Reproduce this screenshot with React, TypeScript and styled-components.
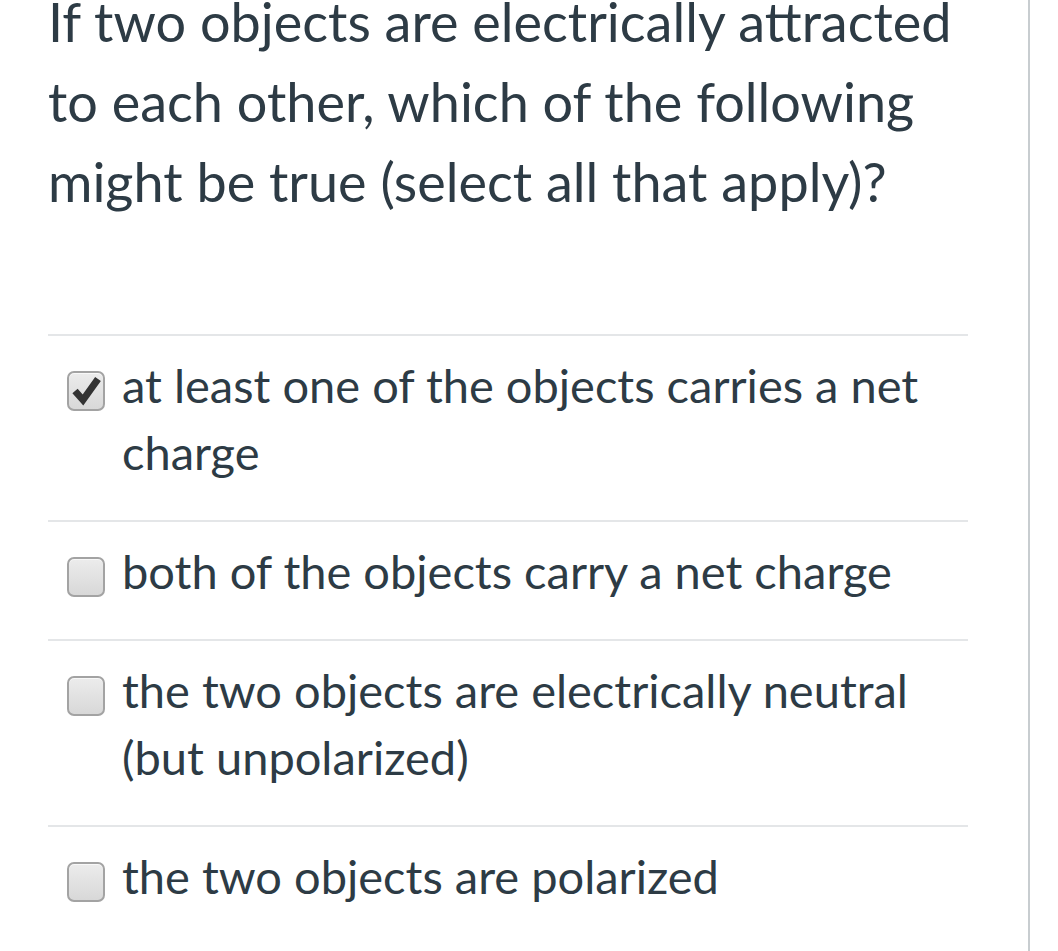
import React from "react";
import styled, { createGlobalStyle } from "styled-components";

const Global = createGlobalStyle`
  html, body { margin: 0; padding: 0; background: #fff; }
  body { font-family: Lato, "Open Sans", sans-serif; color: #2d3b45; overflow: hidden; }
`;

const Page = styled.div`
  width: 1030px;
  height: 951px;
  border-right: 2px solid #c8cdd0;
  box-sizing: border-box;
  overflow: hidden;
  padding-left: 48px;
`;

const Question = styled.p`
  margin: -18px 0 112px 0;
  width: 920px;
  font-size: 54px;
  line-height: 80px;
  font-weight: 400;
`;

const List = styled.div`
  width: 920px;
  display: flex;
  flex-direction: column;
`;

const Row = styled.label`
  display: flex;
  align-items: flex-start;
  gap: 17px;
  padding: 16px 0 34px 19px;
  border-top: 2px solid #e4e6e8;
  font-size: 47px;
  line-height: 67px;
`;

const Box = styled.span`
  flex: 0 0 auto;
  width: 38px;
  height: 40px;
  margin-top: 19px;
  box-sizing: border-box;
  border: 2px solid #a3a3a3;
  border-radius: 7px;
  background: linear-gradient(#ececec, #d8d8d8);
  box-shadow: inset 0 1px 0 #f8f8f8;
  display: flex;
  align-items: center;
  justify-content: center;
`;

const Text = styled.span`
  flex: 1;
`;

const options = [
  { text: "at least one of the objects carries a net charge", checked: true },
  { text: "both of the objects carry a net charge", checked: false },
  { text: "the two objects are electrically neutral (but unpolarized)", checked: false },
  { text: "the two objects are polarized", checked: false },
];

export default function App() {
  return (
    <>
      <Global />
      <Page>
        <Question>
          If two objects are electrically attracted to each other, which of the following might be true (select all that apply)?
        </Question>
        <List>
          {options.map((o) => (
            <Row key={o.text}>
              <Box>
                {o.checked && (
                  <svg width="34" height="36" viewBox="0 0 34 36">
                    <path d="M6 18 L14 27 L29 6" fill="none" stroke="#333" strokeWidth="7" strokeLinejoin="miter" strokeLinecap="butt" />
                  </svg>
                )}
              </Box>
              <Text>{o.text}</Text>
            </Row>
          ))}
        </List>
      </Page>
    </>
  );
}
